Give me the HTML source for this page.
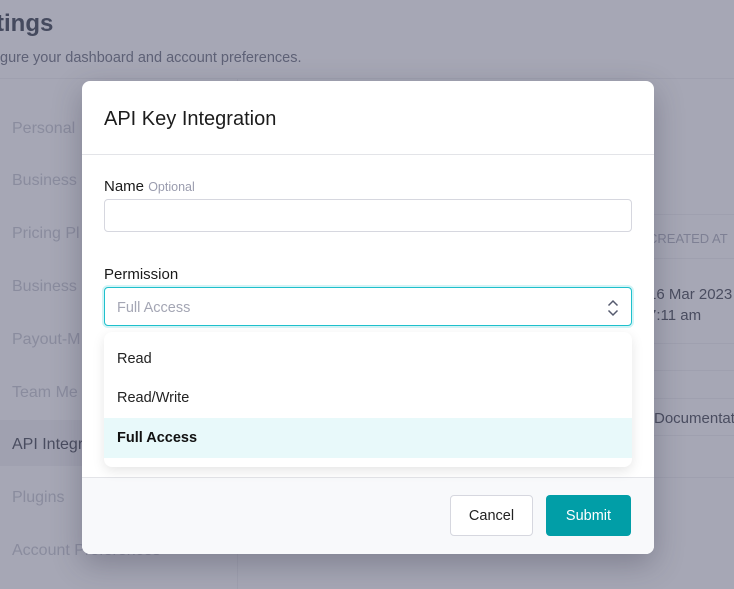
<!DOCTYPE html>
<html><head><style>
*{box-sizing:border-box;margin:0;padding:0}
body{width:734px;height:589px;overflow:hidden;background:#a6a7b5;font-family:"Liberation Sans",sans-serif;position:relative}
.abs{position:absolute}
.bgt{color:#8a8c9e;font-size:16px}
.modal{left:82px;top:81px;width:572px;height:473px;background:#fff;border-radius:8px;box-shadow:0 10px 30px rgba(40,40,60,.3);overflow:hidden}
label{font-size:14px;color:#1a1a1a}
</style></head><body>
<div class="abs" style="left:-4px;top:10px;font-size:24px;font-weight:bold;color:#454a5e">tings</div>
<div class="abs" style="left:0;top:50px;font-size:14.5px;color:#5e6176">gure your dashboard and account preferences.</div>
<div class="abs" style="left:0;top:78px;width:734px;height:1px;background:#9fa0af"></div>
<div class="abs" style="left:237px;top:79px;width:1px;height:510px;background:#9fa0af"></div>
<div class="abs" style="left:0;top:420px;width:237px;height:46px;background:#a0a1b0"></div>
<div class="abs bgt" style="left:12px;top:120px">Personal</div>
<div class="abs bgt" style="left:12px;top:172px">Business</div>
<div class="abs bgt" style="left:12px;top:225px">Pricing Pl</div>
<div class="abs bgt" style="left:12px;top:278px">Business</div>
<div class="abs bgt" style="left:12px;top:331px">Payout-M</div>
<div class="abs bgt" style="left:12px;top:384px">Team Me</div>
<div class="abs" style="left:12px;top:436px;font-size:16px;color:#4a4d60">API Integr</div>
<div class="abs bgt" style="left:12px;top:489px">Plugins</div>
<div class="abs bgt" style="left:12px;top:542px">Account Preferences</div>
<div class="abs" style="left:640px;top:214px;width:94px;height:1px;background:#9fa0af"></div>
<div class="abs" style="left:640px;top:258px;width:94px;height:1px;background:#9fa0af"></div>
<div class="abs" style="left:648px;top:231px;font-size:13px;color:#7e8094">CREATED AT</div>
<div class="abs" style="left:648px;top:284px;font-size:15px;color:#4a4d60;line-height:21px">16 Mar 2023<br>7:11 am</div>
<div class="abs" style="left:640px;top:343px;width:94px;height:1px;background:#9fa0af"></div>
<div class="abs" style="left:640px;top:370px;width:94px;height:1px;background:#9fa0af"></div>
<div class="abs" style="left:640px;top:398px;width:94px;height:38px;border-top:1px solid #9fa0af;border-bottom:1px solid #9fa0af"></div>
<div class="abs" style="left:654px;top:410px;font-size:15px;color:#4a4d60">Documentat</div>
<div class="abs" style="left:640px;top:477px;width:94px;height:1px;background:#9fa0af"></div>

<div class="abs modal">
 <div class="abs" style="left:22px;top:27px;font-size:20px;color:#1c1c1c">API Key Integration</div>
 <div class="abs" style="left:0;top:73px;width:572px;height:1px;background:#e3e4e8"></div>
 <label class="abs" style="left:22px;top:97px;font-size:15px">Name <span style="color:#9a9cae;font-size:12.5px">Optional</span></label>
 <div class="abs" style="left:22px;top:118px;width:528px;height:33px;border:1px solid #d6d7df;border-radius:4px"></div>
 <label class="abs" style="left:22px;top:185px;font-size:15px">Permission</label>
 <div class="abs" style="left:20px;top:204px;width:532px;height:43px;border:3px solid #d3f4f6;border-radius:6px"></div>
 <div class="abs" style="left:22px;top:206px;width:528px;height:39px;border:1.5px solid #1fc0cc;border-radius:4px"></div>
 <div class="abs" style="left:35px;top:219px;font-size:14.5px;color:#a4a6b4">Full Access</div>
 <svg class="abs" style="left:524px;top:217px" width="14" height="20" viewBox="0 0 14 20"><path d="M2.5 7.5L7 3L11.5 7.5M2.5 12.5L7 17L11.5 12.5" fill="none" stroke="#555a6e" stroke-width="1.5"/></svg>
 <div class="abs" style="left:0;top:396px;width:572px;height:77px;background:#f8f9fb;border-top:1px solid #e3e4e8"></div>
 <div class="abs" style="left:22px;top:251px;width:528px;height:135px;background:#fff;border-radius:8px;box-shadow:0 4px 12px rgba(0,0,0,.1);overflow:hidden">
  <div class="abs" style="left:13px;top:19px;font-size:14.5px;color:#222">Read</div>
  <div class="abs" style="left:13px;top:58px;font-size:14.5px;color:#222">Read/Write</div>
  <div class="abs" style="left:0;top:86px;width:528px;height:40px;background:#e8f9fa"></div>
  <div class="abs" style="left:13px;top:98px;font-size:14.5px;font-weight:bold;color:#111">Full Access</div>
 </div>
 <div class="abs" style="left:368px;top:414px;width:83px;height:41px;border:1px solid #d6d7df;border-radius:4px;background:#fff;font-size:14.5px;color:#222;text-align:center;line-height:41px">Cancel</div>
 <div class="abs" style="left:464px;top:414px;width:85px;height:41px;border-radius:4px;background:#019ea7;font-size:14.5px;color:#fff;text-align:center;line-height:43px">Submit</div>
</div>
</body></html>
